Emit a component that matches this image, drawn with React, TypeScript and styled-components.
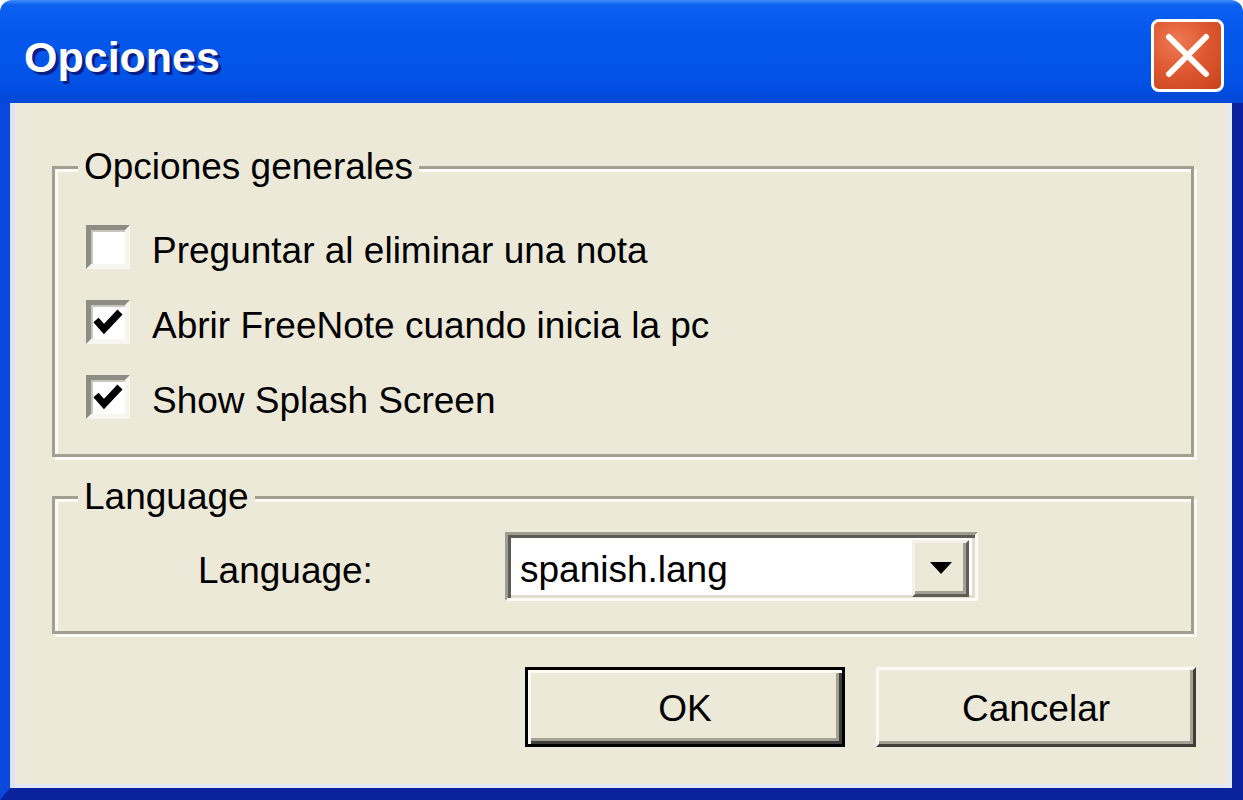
import styled, { createGlobalStyle } from "styled-components";

const GlobalStyle = createGlobalStyle`
    html, body {
        margin: 0;
        padding: 0;
        background: #ffffff;
    }
    body {
        font-family: "Liberation Sans", Arial, sans-serif;
    }
`;

const Window = styled.div`
    width: 1243px;
    height: 800px;
    display: flex;
    flex-direction: column;
    overflow: hidden;
`;

const TitleBar = styled.header`
    height: 103px;
    flex-shrink: 0;
    box-sizing: border-box;
    display: flex;
    align-items: flex-start;
    justify-content: space-between;
    padding: 0 19px 0 24px;
    border-radius: 12px 12px 0 0;
    background: linear-gradient(
        to bottom,
        #3f8cf7 0%,
        #0b60f1 5%,
        #0658ec 30%,
        #0252e6 78%,
        #0047d6 100%
    );
`;

const Title = styled.h1`
    margin: 0;
    padding-top: 36px;
    font-size: 43px;
    line-height: 43px;
    font-weight: bold;
    color: #ffffff;
    text-shadow: 3px 3px 0 #0a1f86;
`;

const CloseButton = styled.button`
    margin-top: 19px;
    width: 73px;
    height: 73px;
    box-sizing: border-box;
    padding: 0;
    border: 3px solid #ffffff;
    border-radius: 8px;
    background: radial-gradient(circle at 35% 30%, #ee7a55 0%, #df5a32 45%, #c7401a 100%);
    display: flex;
    align-items: center;
    justify-content: center;
`;

const Frame = styled.div`
    flex: 1;
    display: flex;
    flex-direction: column;
    border-left: 10px solid #0a49dc;
    border-right: 11px solid #0a239c;
    border-bottom: 12px solid #0a239c;
    background: #ece9d8;
    box-shadow: inset 5px 0 0 #dbe4f6, inset -5px 0 0 #e4e9f4, inset 0 -4px 0 #e2e8f5;
    padding: 44px 38px 0 42px;
`;

const GroupBox = styled.fieldset<{ $pad: string }>`
    margin: 0;
    min-width: 0;
    padding: ${(p) => p.$pad};
    border: 3px solid #a19f92;
    box-shadow: inset 3px 3px 0 #fbfaf6, 3px 3px 0 #fbfaf6;
    display: flex;
    flex-direction: column;
`;

const GroupTitle = styled.legend`
    margin-left: -8px;
    padding: 0 6px;
    font-size: 37px;
    line-height: 40px;
    color: #000000;
    background: #ece9d8;
`;

const Spacer = styled.div<{ $h: number }>`
    height: ${(p) => p.$h}px;
    flex-shrink: 0;
`;

const CheckRow = styled.label`
    height: 75px;
    display: flex;
    align-items: center;
    gap: 22px;
    font-size: 37px;
    color: #000000;
`;

const RowText = styled.span`
    padding-top: 5px;
`;

const CheckBox = styled.span`
    width: 44px;
    height: 44px;
    box-sizing: border-box;
    flex-shrink: 0;
    margin-top: -3px;
    border: 5px solid;
    border-color: #8e8d83 #f7f6f1 #f7f6f1 #8e8d83;
    box-shadow: inset 2px 2px 0 #c9c7bb;
    background: #ffffff;
    display: flex;
    align-items: center;
    justify-content: center;
`;

const LangRow = styled.div`
    height: 69px;
    display: flex;
    align-items: center;
`;

const LangLabel = styled.span`
    width: 307px;
    margin-left: 112px;
    padding-top: 8px;
    font-size: 37px;
    color: #000000;
`;

const Combo = styled.div`
    width: 473px;
    height: 69px;
    box-sizing: border-box;
    border: 3px solid;
    border-color: #9e9d91 #fbfaf6 #fbfaf6 #9e9d91;
    box-shadow: inset 3px 3px 0 #5d5c54, inset -3px -3px 0 #e2dfd0;
    background: #ffffff;
    display: flex;
    align-items: center;
    padding: 0 6px 0 12px;
`;

const ComboText = styled.span`
    flex: 1;
    padding-top: 6px;
    font-size: 37px;
    color: #000000;
`;

const ComboArrow = styled.span`
    width: 57px;
    height: 57px;
    box-sizing: border-box;
    margin-top: 3px;
    border: 3px solid;
    border-color: #f4f2e8 #5f5e56 #5f5e56 #f4f2e8;
    box-shadow: inset -3px -3px 0 #a3a194;
    background: #ece9d8;
    display: flex;
    align-items: center;
    justify-content: center;
`;

const ButtonRow = styled.div`
    margin-top: 33px;
    margin-right: -2px;
    display: flex;
    justify-content: flex-end;
    gap: 31px;
`;

const DialogButton = styled.button<{ $default?: boolean }>`
    width: 320px;
    height: 80px;
    box-sizing: border-box;
    padding: 4px 0 0;
    font-family: "Liberation Sans", Arial, sans-serif;
    font-size: 37px;
    color: #000000;
    background: #ece9d8;
    border: 3px solid;
    border-color: ${(p) => (p.$default ? "#000000" : "#fbfaf5 #3f3e39 #3f3e39 #fbfaf5")};
    box-shadow: ${(p) =>
        p.$default
            ? "inset 3px 3px 0 #fbfaf5, inset -3px -3px 0 #3f3e39, inset -6px -6px 0 #a3a194"
            : "inset -3px -3px 0 #a3a194"};
`;

const CheckMark = () => (
    <svg width="30" height="26" viewBox="0 0 30 26">
        <polyline
            points="3,11 11,20 27,3"
            fill="none"
            stroke="#000000"
            strokeWidth="7"
            strokeLinejoin="miter"
        />
    </svg>
);

const options = [
    { text: "Preguntar al eliminar una nota", checked: false },
    { text: "Abrir FreeNote cuando inicia la pc", checked: true },
    { text: "Show Splash Screen", checked: true },
];

function App() {
    return (
        <>
            <GlobalStyle />
            <Window>
                <TitleBar>
                    <Title>Opciones</Title>
                    <CloseButton aria-label="Cerrar">
                        <svg width="67" height="67" viewBox="0 0 67 67">
                            <path
                                d="M15 15 L52 52 M52 15 L15 52"
                                stroke="#ffffff"
                                strokeWidth="6"
                                strokeLinecap="round"
                            />
                        </svg>
                    </CloseButton>
                </TitleBar>
                <Frame>
                    <GroupBox $pad="24px 0 18px 31px">
                        <GroupTitle>Opciones generales</GroupTitle>
                        {options.map((o) => (
                            <CheckRow key={o.text}>
                                <CheckBox>{o.checked && <CheckMark />}</CheckBox>
                                <RowText>{o.text}</RowText>
                            </CheckRow>
                        ))}
                    </GroupBox>
                    <Spacer $h={20} />
                    <GroupBox $pad="15px 0 30px 31px">
                        <GroupTitle>Language</GroupTitle>
                        <LangRow>
                            <LangLabel>Language:</LangLabel>
                            <Combo>
                                <ComboText>spanish.lang</ComboText>
                                <ComboArrow>
                                    <svg width="22" height="12" viewBox="0 0 22 12">
                                        <polygon points="0,0 22,0 11,12" fill="#000000" />
                                    </svg>
                                </ComboArrow>
                            </Combo>
                        </LangRow>
                    </GroupBox>
                    <ButtonRow>
                        <DialogButton $default>OK</DialogButton>
                        <DialogButton>Cancelar</DialogButton>
                    </ButtonRow>
                </Frame>
            </Window>
        </>
    );
}

export default App;
